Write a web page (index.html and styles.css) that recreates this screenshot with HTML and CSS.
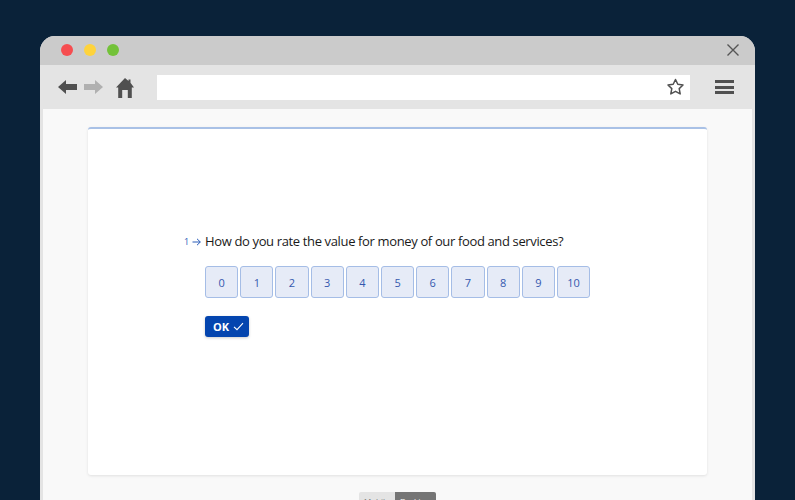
FILE: index.html
```html
<!DOCTYPE html>
<html lang="en">
<head>
<meta charset="utf-8">
<title>Survey preview</title>
<link rel="stylesheet" href="styles.css">
</head>
<body>
<div class="browser">
  <div class="titlebar">
    <div class="lights"><span class="light red"></span><span class="light yellow"></span><span class="light green"></span></div>
    <svg class="close" width="14" height="14" viewBox="0 0 14 14"><path d="M1.500 1.500 12.500 12.500M12.500 1.500 1.500 12.500" stroke="#555" stroke-width="1.400" fill="none"/></svg>
  </div>
  <div class="toolbar">
    <svg class="nav" width="20" height="16" viewBox="0 0 20 16"><path d="M0 8 8 1V5H19V11H8V15Z" fill="#505050"/></svg>
    <svg class="nav fwd" width="20" height="16" viewBox="0 0 20 16"><path d="M19 8 11 1V5H0V11H11V15Z" fill="#b0b0b0"/></svg>
    <svg class="nav home" width="18" height="20" viewBox="0 0 18 20"><path d="M9 0 12.500 3V1.500H14.500V4.800L18 9.500H15.800V20H11.800V12H6.200V20H2.200V9.500H0Z" fill="#505050"/></svg>
    <div class="address">
      <svg width="19" height="18" viewBox="0 0 19 18"><path d="M9.500 1.500 11.800 6.300 17 7 13.200 10.600 14.200 15.900 9.500 13.300 4.800 15.900 5.800 10.600 2 7 7.200 6.300Z" fill="none" stroke="#505050" stroke-width="1.500" stroke-linejoin="round"/></svg>
    </div>
    <div class="menu"><span></span><span></span><span></span></div>
  </div>
  <div class="content">
    <main class="card">
      <div class="question">
        <span class="number">1<svg width="9" height="8" viewBox="0 0 9 8"><path d="M0.500 4H8.300M5 0.800 8.300 4 5 7.200" fill="none" stroke="#2a5cb8" stroke-width="1"/></svg></span>
        <h1>How do you rate the value for money of our food and services?</h1>
      </div>
      <div class="scale">
        <button>0</button><button>1</button><button>2</button><button>3</button><button>4</button><button>5</button><button>6</button><button>7</button><button>8</button><button>9</button><button>10</button>
      </div>
      <button class="ok">OK<svg width="11" height="9" viewBox="0 0 11 9"><path d="M1 4.800 4 7.700 10 1.200" fill="none" stroke="#fff" stroke-width="1.100"/></svg></button>
    </main>
    <div class="toggle"><span class="mobile">Mobile</span><span class="desktop">Desktop</span></div>
  </div>
</div>
</body>
</html>
```
FILE: styles.css
```css
* { box-sizing: border-box; }
html, body { margin: 0; height: 500px; overflow: hidden; }
body { background: #0a2239; padding: 36px 40px 0; font-family: "Open Sans", "Noto Sans", sans-serif; }
.browser { height: 480px; border-radius: 15px 15px 0 0; overflow: hidden; background: #e4e4e4; }
.titlebar { height: 29px; background: #cbcbcb; display: flex; align-items: center; justify-content: space-between; padding: 0 15px 1px 21px; }
.lights { display: flex; gap: 11px; }
.light { width: 12px; height: 12px; border-radius: 50%; }
.red { background: #f64d50; }
.yellow { background: #fed33c; }
.green { background: #73c239; }
.toolbar { height: 44px; display: flex; align-items: center; padding: 0 21px 0 18px; }
.nav { display: block; flex: none; }
.fwd { margin-left: 6px; }
.home { margin: 1px 23px 0 12px; }
.address { width: 533px; height: 25px; background: #fff; display: flex; align-items: center; justify-content: flex-end; padding-right: 5px; }
.menu { margin-left: 25px; width: 19px; display: flex; flex-direction: column; gap: 2.500px; }
.menu span { height: 3px; background: #505050; }
.content { height: 407px; margin: 0 3px; background: #f9f9f9; padding: 18px 45px 0; display: flex; flex-direction: column; align-items: center; }
.card { width: 619px; height: 348px; flex: none; background: #fff; border-top: 2px solid #a9c1e6; border-radius: 3px; box-shadow: 0 1px 3px rgba(0,0,0,.1); padding: 102px 0 0 95px; }
.question { display: flex; align-items: center; height: 20px; position: relative; }
.number { position: absolute; left: 1px; top: 5px; font-size: 9px; line-height: 12px; color: #2a5cb8; display: flex; align-items: center; gap: 3px; }
h1 { margin: 0 0 0 22px; font-size: 13px; font-weight: 400; letter-spacing: -0.36px; color: #1a1a1a; line-height: 20px; white-space: nowrap; }
.scale { display: flex; gap: 2px; margin: 15px 0 0 22px; }
.scale button { width: 33.200px; height: 32px; padding: 0; font: 400 11px "Open Sans", sans-serif; color: #3458ae; background: #e6ebf7; border: 1px solid #a5bde6; border-radius: 3px; }
.ok { display: flex; align-items: center; gap: 4px; width: 44px; height: 21px; margin: 18px 0 0 22px; padding: 0 0 0 8px; font: 700 11px "Open Sans", sans-serif; color: #fff; background: #0445af; border: 0; border-radius: 3px; box-shadow: 0 1px 3px rgba(0,0,0,.2); }
.toggle { display: flex; margin-top: 17px; height: 20px; font-size: 8px; line-height: 14px; flex: none; }
.toggle span { padding: 2px 5px 0; }
.mobile { background: #e4e4e4; color: #777; border-radius: 2px 0 0 2px; width: 36px; }
.desktop { background: #757575; color: #fff; border-radius: 0 2px 2px 0; width: 41px; }
```
